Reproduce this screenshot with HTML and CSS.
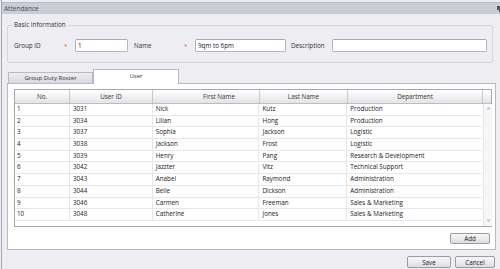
FILE: index.html
```html
<!DOCTYPE html>
<html>
<head>
<meta charset="utf-8">
<link rel="stylesheet" href="styles.css">
</head>
<body>
<div class="window">
  <div class="titlebar">
    <span class="title">Attendance</span>
    <svg class="pin" width="5" height="6" viewBox="0 0 5 6"><rect x="0" y="0" width="5" height="4" fill="#555"/><rect x="2" y="4" width="1" height="2" fill="#555"/></svg>
  </div>
  <fieldset class="basic">
    <legend>Basic Information</legend>
    <div class="form-row">
      <span class="lbl lbl-gid">Group ID</span>
      <span class="req">*</span>
      <div class="input in-gid">1</div>
      <span class="lbl lbl-name">Name</span>
      <span class="req req-name">*</span>
      <div class="input in-name">9qm to 6pm</div>
      <span class="lbl lbl-desc">Description</span>
      <div class="input in-desc"></div>
    </div>
  </fieldset>
  <div class="tabs">
    <div class="tab">Group Duty Roster</div>
    <div class="tab active">User</div>
  </div>
  <div class="panel">
    <div class="grid">
      <div class="head">
        <div class="hc c1">No.</div>
        <div class="hc c2">User ID</div>
        <div class="hc c3 fn">First Name</div>
        <div class="hc c4">Last Name</div>
        <div class="hc c5">Department</div>
        <div class="hc c6"></div>
      </div>
      <div class="body">
        <div class="rows">
          <div class="row"><div class="c1">1</div><div class="c2">3031</div><div class="c3">Nick</div><div class="c4">Kutz</div><div class="c5">Production</div></div>
          <div class="row"><div class="c1">2</div><div class="c2">3034</div><div class="c3">Lilian</div><div class="c4">Hong</div><div class="c5">Production</div></div>
          <div class="row"><div class="c1">3</div><div class="c2">3037</div><div class="c3">Sophia</div><div class="c4">Jackson</div><div class="c5">Logistic</div></div>
          <div class="row"><div class="c1">4</div><div class="c2">3038</div><div class="c3">Jackson</div><div class="c4">Frost</div><div class="c5">Logistic</div></div>
          <div class="row"><div class="c1">5</div><div class="c2">3039</div><div class="c3">Henry</div><div class="c4">Pang</div><div class="c5">Research &amp; Development</div></div>
          <div class="row"><div class="c1">6</div><div class="c2">3042</div><div class="c3">Jazzter</div><div class="c4">Vitz</div><div class="c5">Technical Support</div></div>
          <div class="row"><div class="c1">7</div><div class="c2">3043</div><div class="c3">Anabel</div><div class="c4">Raymond</div><div class="c5">Administration</div></div>
          <div class="row"><div class="c1">8</div><div class="c2">3044</div><div class="c3">Belle</div><div class="c4">Dickson</div><div class="c5">Administration</div></div>
          <div class="row"><div class="c1">9</div><div class="c2">3046</div><div class="c3">Carmen</div><div class="c4">Freeman</div><div class="c5">Sales &amp; Marketing</div></div>
          <div class="row"><div class="c1">10</div><div class="c2">3048</div><div class="c3">Catherine</div><div class="c4">Jones</div><div class="c5">Sales &amp; Marketing</div></div>
        </div>
        <div class="scroll">
          <svg width="7" height="4" viewBox="0 0 7 4"><path d="M1 3.5 L3.5 1 L6 3.5 Z" fill="#c4c4c8"/></svg>
          <svg width="7" height="4" viewBox="0 0 7 4"><path d="M1 0.5 L3.5 3 L6 0.5 Z" fill="#c4c4c8"/></svg>
        </div>
      </div>
    </div>
    <div class="panel-actions">
      <button class="btn btn-add">Add</button>
    </div>
  </div>
  <div class="actions">
    <button class="btn btn-save">Save</button>
    <button class="btn btn-cancel">Cancel</button>
  </div>
</div>
</body>
</html>
```

FILE: styles.css
```css
html, body {
  margin: 0;
  padding: 0;
}
body {
  width: 500px;
  height: 269px;
  overflow: hidden;
  background: #eeedf2;
  font-family: "Open Sans", "Noto Sans", sans-serif;
  font-size: 6.3px;
  color: #2a2a2a;
}
.window {
  height: 269px;
  margin-left: 1px;
  border-left: 1px solid #a4a4b2;
  display: flex;
  flex-direction: column;
  box-sizing: border-box;
}
.titlebar {
  height: 12px;
  margin-top: 2px;
  background: #c9cdd6;
  border-top: 1px solid #b8bcc6;
  box-sizing: border-box;
  display: flex;
  align-items: center;
  justify-content: space-between;
  padding-left: 2px;
}
.title {
  color: #454a55;
  font-size: 6.5px;
}
.pin {
  margin-right: -2px;
}
.basic {
  margin: 7px 0 0 5px;
  width: 486px;
  box-sizing: border-box;
  border: 1px solid #d6d6de;
  border-radius: 2px;
  padding: 0 0 10px 6px;
  min-width: 0;
}
.basic legend {
  padding: 0 2px;
  margin-left: -2px;
  line-height: 8px;
  color: #333;
}
.form-row {
  display: flex;
  align-items: center;
  margin-top: 10px;
  height: 13px;
}
.lbl {
  color: #333;
}
.lbl-gid { width: 50px; }
.req {
  color: #e05050;
  width: 11px;
  font-size: 6px;
}
.in-gid { width: 53px; }
.lbl-name { width: 50px; margin-left: 6px; }
.in-name { width: 91px; }
.lbl-desc { width: 41px; margin-left: 5px; }
.in-desc { width: 155px; }
.input {
  height: 13px;
  box-sizing: border-box;
  background: #fff;
  border: 1px solid #b4b6be;
  border-top-color: #a8aab2;
  border-radius: 2px;
  padding-left: 2px;
  line-height: 11px;
  color: #222;
}
.tabs {
  display: flex;
  align-items: flex-end;
  margin: 6px 0 0 6px;
  height: 14px;
  position: relative;
  z-index: 1;
}
.tab {
  width: 85px;
  height: 11px;
  box-sizing: border-box;
  border: 1px solid #b9b9c4;
  border-bottom: none;
  background: linear-gradient(#eeeef2, #d8d8e0);
  text-align: center;
  line-height: 10px;
  font-size: 6px;
  color: #333;
}
.tab.active {
  width: 86px;
  height: 15px;
  background: #fff;
  line-height: 13px;
  margin-bottom: -1px;
}
.panel {
  margin-left: 5px;
  width: 489px;
  box-sizing: border-box;
  border: 1px solid #b9b9c4;
  background: #fff;
  padding: 5px 4px 5px 6px;
}
.grid {
  width: 478px;
  height: 138px;
  box-sizing: border-box;
  border: 1px solid #a6a6ac;
  display: flex;
  flex-direction: column;
}
.head {
  display: flex;
  height: 13px;
  background: linear-gradient(#ffffff, #f2f2f4 50%, #e4e4e8);
  border-bottom: 1px solid #bcbcc2;
  flex: none;
}
.hc {
  box-sizing: border-box;
  border-right: 1px solid #c8c8ce;
  text-align: center;
  line-height: 13px;
  color: #333;
}
.hc.c6 { border-right: none; }
.hc.fn { padding-left: 26px; }
.c1 { width: 55px; }
.c2 { width: 83px; }
.c3 { width: 107px; }
.c4 { width: 88px; }
.c5 { width: 135px; }
.c6 { width: 8px; }
.body {
  display: flex;
  flex: 1;
  min-height: 0;
}
.rows {
  width: 467px;
  flex: none;
}
.row {
  display: flex;
  height: 11.7px;
  box-sizing: border-box;
  border-bottom: 1px solid #e6e6ec;
}
.row > div {
  box-sizing: border-box;
  border-right: 1px solid #e6e6ec;
  padding-left: 3px;
  line-height: 10.7px;
  white-space: nowrap;
  color: #222;
}
.row > .c1 { padding-left: 2px; }
.row > .c5 { border-right: none; }
.scroll {
  width: 9px;
  flex: none;
  margin-left: 1px;
  background: #f7f7f8;
  border-left: 1px solid #e4e4e8;
  display: flex;
  flex-direction: column;
  justify-content: space-between;
  align-items: center;
  padding: 2px 0 3px;
  box-sizing: border-box;
}
.panel-actions {
  display: flex;
  justify-content: flex-end;
  margin-top: 6px;
  padding-right: 0;
}
.btn {
  font-family: inherit;
  font-size: 6.3px;
  color: #222;
  height: 11px;
  padding: 0;
  box-sizing: border-box;
  border: 1px solid #9c9ca6;
  border-radius: 2px;
  background: linear-gradient(#f6f6f6, #ececec 50%, #dcdcdc);
  line-height: 9px;
}
.btn-add { width: 40px; margin-right: 1px; }
.actions {
  display: flex;
  justify-content: flex-end;
  gap: 4px;
  margin-top: 6px;
  padding-right: 5px;
}
.btn-save { width: 44px; height: 12px; }
.btn-cancel { width: 40px; height: 12px; }
```
